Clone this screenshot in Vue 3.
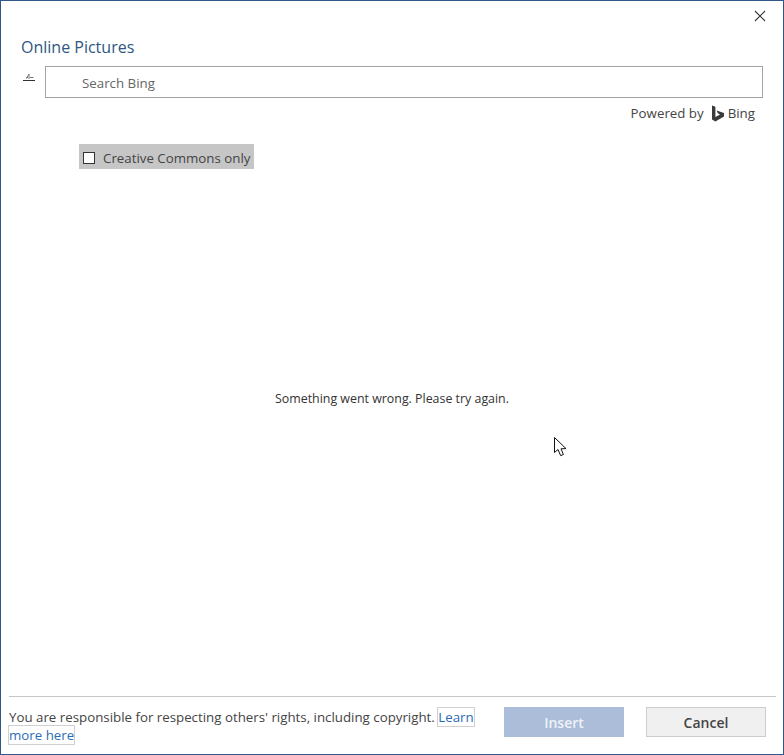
<script setup>
const title = 'Online Pictures'
</script>

<template>
  <div class="dialog">
    <div class="topbar">
      <svg class="close" width="12" height="12" viewBox="0 0 12 12" aria-label="Close">
        <path d="M1 1 L11 11 M11 1 L1 11" stroke="#3a3a3a" stroke-width="1.1" fill="none" />
      </svg>
    </div>
    <h1 class="title">{{ title }}</h1>
    <div class="search-row">
      <svg class="mini" width="14" height="10" viewBox="0 0 14 10">
        <path d="M0 8.5 H12" stroke="#333" stroke-width="1" fill="none" />
        <path d="M3.5 6.5 L6 2 M6 2 V7 M7 5.5 H10.5 M3 5.5 H5" stroke="#777" stroke-width="1" fill="none" />
      </svg>
      <div class="search"><span>Search Bing</span></div>
    </div>
    <div class="powered">
      <span>Powered by</span>
      <svg class="bing" width="14" height="17" viewBox="0 0 14 17">
        <path d="M1 0.5 L4.4 1.7 V12 L9 9.4 L6.8 8.3 L5.6 5.4 L13 8 V11.6 L4.4 16.5 L1 14.6 Z" fill="#3a3a3a" />
      </svg>
      <span>Bing</span>
    </div>
    <label class="cc">
      <span class="box"></span>
      <span>Creative Commons only</span>
    </label>
    <div class="message">Something went wrong. Please try again.</div>
    <div class="footer">
      <p class="legal">You are responsible for respecting others' rights, including copyright. <a class="link">Learn more here</a></p>
      <div class="actions">
        <button class="btn insert">Insert</button>
        <button class="btn cancel">Cancel</button>
      </div>
    </div>
    <svg class="pointer" width="14" height="21" viewBox="0 0 14 21">
      <path d="M0.5 0.5 V15.5 L4 12.5 L6.6 18.6 L9.4 17.5 L7 11.8 L12 11.6 Z" fill="#fff" stroke="#111" stroke-width="1" stroke-linejoin="round" />
    </svg>
  </div>
</template>

<style>
html, body { margin: 0; background: #fff; }
</style>

<style scoped>
.dialog {
  position: relative;
  box-sizing: border-box;
  width: 784px;
  height: 755px;
  border: 1px solid #2f5788;
  background: #fff;
  display: flex;
  flex-direction: column;
  font-family: "Open Sans", "Noto Sans", "Liberation Sans", sans-serif;
  font-size: 13.3px;
  color: #444;
  overflow: hidden;
}
.topbar {
  display: flex;
  justify-content: flex-end;
  padding: 9px 17px 0 0;
  height: 12px;
}
.title {
  margin: 13px 0 0 20px;
  font-size: 16px;
  font-weight: 400;
  line-height: 24px;
  color: #305682;
}
.search-row {
  display: flex;
  align-items: flex-start;
  margin-top: 7px;
  padding: 0 20px 0 22px;
}
.mini { margin-top: 6px; }
.search {
  box-sizing: border-box;
  flex: 1;
  height: 32px;
  margin-left: 8px;
  padding-left: 36px;
  border: 1px solid #a3a3a3;
  line-height: 33px;
  color: #666;
}
.powered {
  display: flex;
  align-items: center;
  justify-content: flex-end;
  gap: 6px;
  height: 20px;
  margin-top: 5px;
  padding-right: 28px;
  color: #444;
}
.bing { margin-left: 1px; margin-right: -3px; }
.cc {
  align-self: flex-start;
  display: flex;
  align-items: center;
  gap: 8px;
  height: 25px;
  margin: 21px 0 0 78px;
  padding: 2px 4px 0 4px;
  box-sizing: border-box;
  background: #c6c6c6;
  color: #444;
}
.box {
  box-sizing: border-box;
  width: 12px;
  height: 12px;
  border: 1px solid #333;
  background: #fff;
}
.message {
  flex: 1;
  padding-top: 220px;
  text-align: center;
  font-size: 12.4px;
  line-height: 20px;
  color: #333;
}
.footer {
  display: flex;
  justify-content: space-between;
  align-items: flex-start;
  margin: 0 7px 0 8px;
  height: 57px;
  border-top: 1px solid #c6c6c6;
}
.legal {
  width: 480px;
  margin: 11px 0 0;
  line-height: 18px;
  color: #444;
}
.link {
  color: #2b6cb5;
  outline: 1px solid #d0d0d0;
}
.actions {
  display: flex;
  gap: 22px;
  margin: 10px 10px 0 0;
}
.btn {
  box-sizing: border-box;
  width: 120px;
  height: 30px;
  font-family: inherit;
  font-size: 14px;
  font-weight: 600;
  padding: 0;
}
.insert { background: #abbdd9; border: none; color: #eef2f8; }
.cancel { background: #f0f0f0; border: 1px solid #cdcdcd; color: #444; }
.pointer { position: absolute; left: 553px; top: 436px; }
</style>
